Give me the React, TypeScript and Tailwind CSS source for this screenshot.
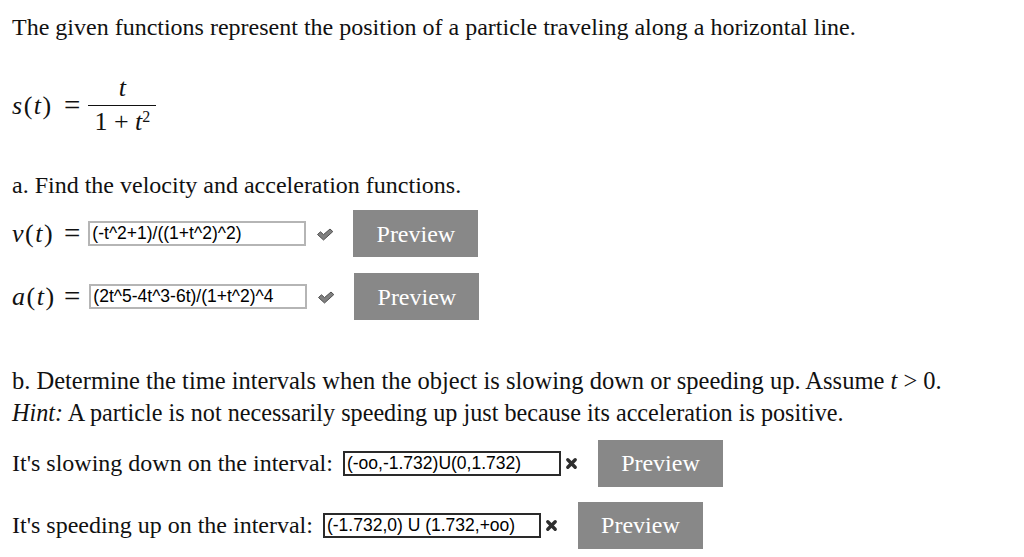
import React from 'react';

const serif = "font-['Liberation_Serif','Times_New_Roman',serif]";
const inputFont = "font-['Liberation_Sans',Arial,sans-serif]";

const PreviewButton: React.FC<{ className?: string }> = ({ className = '' }) => (
    <button className={`h-[47px] w-[125px] bg-[#888888] text-white text-[24px] ${serif} ${className}`}>
        Preview
    </button>
);

// gray heavy check mark
const Check = () => (
    <svg className="ml-[10px] mt-[2px]" width="18" height="13" viewBox="0 0 18 13">
        <path d="M1.5 6.5 L4.5 3.8 L7.5 6.6 L14 1 L16.8 3.6 L7.5 12 Z" fill="#808080" stroke="#505050" strokeWidth="1" strokeLinejoin="round" />
    </svg>
);

// dark heavy cross
const Cross = () => (
    <svg className="ml-[4px]" width="13" height="13" viewBox="0 0 13 13">
        <path d="M2.8 2.8 L10.2 10.2 M10.2 2.8 L2.8 10.2" stroke="#2e2e2e" strokeWidth="3.4" strokeLinecap="round" />
    </svg>
);

const MathFn: React.FC<{ name: string }> = ({ name }) => (
    <span className={`${serif} flex items-center text-[26px] text-[#111]`}>
        <span className="w-[44px] tracking-[1.5px]">
            <i>{name}</i>(<i>t</i>)
        </span>
        <span className="ml-[8px] text-[29px] leading-none">=</span>
    </span>
);

const AnswerInput: React.FC<{ value: string; dark?: boolean; className?: string }> = ({ value, dark, className = '' }) => (
    <input
        readOnly
        value={value}
        className={`h-[25px] w-[218px] border-2 px-[2px] text-[17.5px] text-black ${inputFont} ${
            dark ? 'border-[#2a2a2a]' : 'border-[#b5b5b5]'
        } ${className}`}
    />
);

export default function App() {
    return (
        <div className={`min-h-[557px] w-[1024px] bg-white px-[12px] pt-[13px] text-[#111] ${serif}`}>
            <p className="text-[24px] leading-[28px]">
                The given functions represent the position of a particle traveling along a horizontal line.
            </p>

            <div className="mt-[31px] flex h-[66px] items-center">
                <MathFn name="s" />
                <span className="ml-[8px] inline-flex flex-col items-center text-[26px] leading-[28px]">
                    <span className="px-[4px] pb-[3px]"><i>t</i></span>
                    <span className="h-px w-[68px] bg-[#111]" />
                    <span className="pt-[2px]">
                        1 + <i>t</i><sup className="text-[16px]">2</sup>
                    </span>
                </span>
            </div>

            <p className="mt-[33px] text-[24px] leading-[28px]">a. Find the velocity and acceleration functions.</p>

            <div className="mt-[11px] flex h-[47px] items-center">
                <MathFn name="v" />
                <AnswerInput value="(-t^2+1)/((1+t^2)^2)" className="ml-[8px] w-[217px]" />
                <Check />
                <PreviewButton className="ml-[19px]" />
            </div>

            <div className="mt-[16px] flex h-[47px] items-center">
                <MathFn name="a" />
                <AnswerInput value="(2t^5-4t^3-6t)/(1+t^2)^4" className="ml-[9px]" />
                <Check />
                <PreviewButton className="ml-[19px]" />
            </div>

            <p className="mt-[47px] text-[24.5px] leading-[28px]">
                b. Determine the time intervals when the object is slowing down or speeding up. Assume <i>t</i> &gt; 0.
            </p>
            <p className="mt-[4px] text-[24.2px] leading-[28px]">
                <i>Hint:</i> A particle is not necessarily speeding up just because its acceleration is positive.
            </p>

            <div className="mt-[13px] flex h-[46px] items-center">
                <span className="text-[24px]">It's slowing down on the interval:</span>
                <AnswerInput value="(-oo,-1.732)U(0,1.732)" dark className="ml-[10px]" />
                <Cross />
                <PreviewButton className="ml-[20px] h-[46px]" />
            </div>

            <div className="mt-[16px] flex h-[46px] items-center">
                <span className="text-[24px]">It's speeding up on the interval:</span>
                <AnswerInput value="(-1.732,0) U (1.732,+oo)" dark className="ml-[10px]" />
                <Cross />
                <PreviewButton className="ml-[20px] h-[46px]" />
            </div>
        </div>
    );
}
